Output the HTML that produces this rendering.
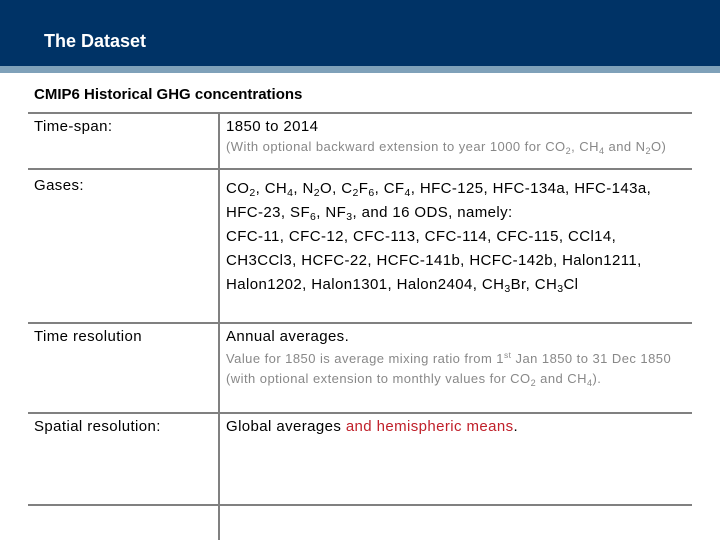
<!DOCTYPE html>
<html><head><style>
body{margin:0;width:720px;height:540px;position:relative;background:#fff;font-family:"Liberation Sans",sans-serif;overflow:hidden}
.a{position:absolute;white-space:nowrap}
.t{font-size:15px;color:#000;letter-spacing:0.4px}
.g{font-size:13px;color:#888;letter-spacing:0.45px}
.h{position:absolute;left:28px;width:664px;height:2px;background:#808080}
sub{font-size:70%;vertical-align:-3px;line-height:0}
sup{font-size:65%;vertical-align:5px;line-height:0}
</style></head><body>
<div style="position:absolute;left:0;top:0;width:720px;height:66px;background:#003366"></div>
<div style="position:absolute;left:0;top:66px;width:720px;height:7px;background:#7fa1b9"></div>
<div class="a" style="left:44px;top:31px;font-size:18px;font-weight:bold;color:#fff">The Dataset</div>
<div class="a" style="left:34px;top:86px;font-size:15px;font-weight:bold">CMIP6 Historical GHG concentrations</div>
<div class="h" style="top:112px"></div>
<div class="h" style="top:168px"></div>
<div class="h" style="top:322px"></div>
<div class="h" style="top:412px"></div>
<div class="h" style="top:504px"></div>
<div style="position:absolute;left:218px;top:113px;width:2px;height:427px;background:#808080"></div>
<div class="a t" style="left:34px;top:118px">Time-span:</div>
<div class="a t" style="left:226px;top:118px">1850 to 2014</div>
<div class="a g" style="left:226px;top:139px">(With optional backward extension to year 1000 for CO<sub>2</sub>, CH<sub>4</sub> and N<sub>2</sub>O)</div>
<div class="a t" style="left:34px;top:177px">Gases:</div>
<div class="a t" style="left:226px;top:177px;line-height:24px">CO<sub>2</sub>, CH<sub>4</sub>, N<sub>2</sub>O, C<sub>2</sub>F<sub>6</sub>, CF<sub>4</sub>, HFC-125, HFC-134a, HFC-143a,<br>HFC-23, SF<sub>6</sub>, NF<sub>3</sub>, and 16 ODS, namely:<br>CFC-11, CFC-12, CFC-113, CFC-114, CFC-115, CCl14,<br>CH3CCl3, HCFC-22, HCFC-141b, HCFC-142b, Halon1211,<br>Halon1202, Halon1301, Halon2404, CH<sub>3</sub>Br, CH<sub>3</sub>Cl</div>
<div class="a t" style="left:34px;top:328px">Time resolution</div>
<div class="a t" style="left:226px;top:328px">Annual averages.</div>
<div class="a g" style="left:226px;top:349px;line-height:20px">Value for 1850 is average mixing ratio from 1<sup>st</sup> Jan 1850 to 31 Dec 1850<br>(with optional extension to monthly values for CO<sub>2</sub> and CH<sub>4</sub>).</div>
<div class="a t" style="left:34px;top:418px">Spatial resolution:</div>
<div class="a t" style="left:226px;top:418px">Global averages <span style="color:#c0202a">and hemispheric means</span>.</div>
</body></html>
